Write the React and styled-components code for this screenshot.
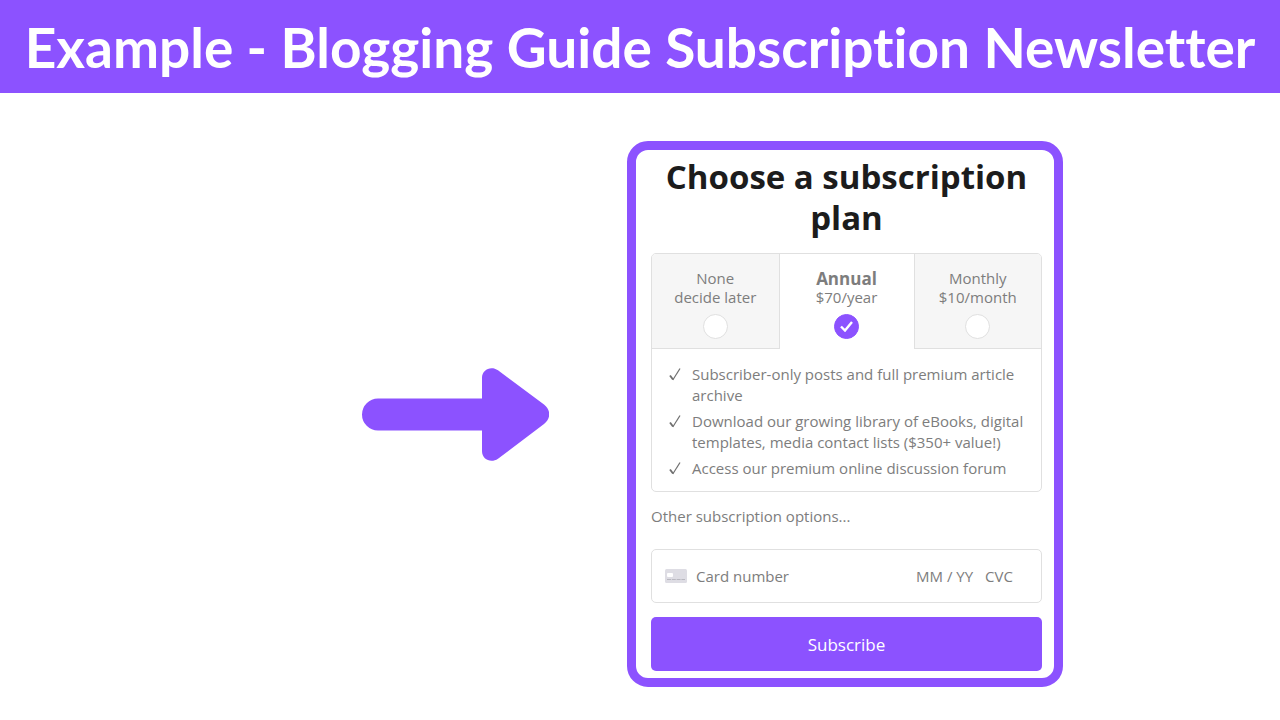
import React, { useState } from 'react';
import styled, { createGlobalStyle } from 'styled-components';

const GlobalStyle = createGlobalStyle`
  * {
    box-sizing: border-box;
  }
  body {
    margin: 0;
    background-color: #fff;
    color: #7d7d7d;
    font-family: 'Open Sans', 'Noto Sans', sans-serif;
    font-size: 15px;
  }
  button,
  input {
    font-family: inherit;
    font-size: inherit;
  }
`;

const Banner = styled.header`
  display: flex;
  align-items: center;
  justify-content: center;
  height: 93px;
  background-color: #8c52ff;
`;

const BannerTitle = styled.h1`
  margin: 0;
  color: #fff;
  font-family: Lato, sans-serif;
  font-size: 55px;
  font-weight: 700;
  font-variant-ligatures: none;
  line-height: 64px;
  white-space: nowrap;
`;

const Main = styled.main`
  display: flex;
  align-items: center;
  justify-content: center;
  gap: 78px;
  padding: 48px 0 33px 145px;
`;

const Arrow = styled.svg`
  flex: none;
  width: 187px;
  height: 93px;
  fill: #8c52ff;
`;

const Card = styled.form`
  flex: none;
  width: 436px;
  padding: 6px 12px 7px 15px;
  border: 9px solid #8c52ff;
  border-radius: 21px;
`;

const CardTitle = styled.h2`
  margin: 0 0 15px;
  color: #1c1c1c;
  font-size: 33px;
  font-weight: 700;
  line-height: 41px;
  text-align: center;
`;

const PlanBox = styled.section`
  border: 1px solid #e0e0e0;
  border-radius: 5px;
  overflow: hidden;
`;

const Plans = styled.div`
  display: grid;
  grid-template-columns: 1fr 136px 1fr;
`;

const Plan = styled.label`
  display: flex;
  flex-direction: column;
  align-items: center;
  padding: 15px 0 9px;
  line-height: 19px;
  border: 0 solid #e0e0e0;
  border-bottom-width: 1px;
  background-color: #f6f6f6;
  cursor: pointer;
  &:has(input:checked) {
    border-width: 0 1px;
    padding-bottom: 10px;
    background-color: #fff;
  }
`;

const PlanName = styled.span`
  font-size: ${(props) => (props.$selected ? '17px' : '15px')};
  font-weight: ${(props) => (props.$selected ? 700 : 400)};
`;

const RadioWrapper = styled.span`
  display: grid;
  place-items: center;
  margin-top: 7px;
`;

const Radio = styled.input`
  grid-area: 1 / 1;
  appearance: none;
  width: 25px;
  height: 25px;
  margin: 0;
  border: 1px solid #e0e0e0;
  border-radius: 50%;
  background-color: #fff;
  &:checked {
    border-color: #8c52ff;
    background-color: #8c52ff;
  }
`;

const RadioTick = styled.svg`
  grid-area: 1 / 1;
  width: 13px;
  height: 11px;
  fill: none;
  stroke: #fff;
  stroke-width: 2.4;
  pointer-events: none;
`;

const Benefits = styled.ul`
  display: flex;
  flex-direction: column;
  gap: 5px;
  margin: 0;
  padding: 15px 12px 12px 17px;
  list-style: none;
`;

const Benefit = styled.li`
  display: flex;
  gap: 11px;
  line-height: 21px;
`;

const BenefitTick = styled.svg`
  flex: none;
  width: 12px;
  height: 21px;
  fill: none;
  stroke: #6f6f6f;
`;

const OtherOptions = styled.a`
  display: block;
  margin: 14px 0 23px;
  color: inherit;
  line-height: 20px;
  text-decoration: none;
`;

const CardField = styled.div`
  display: flex;
  align-items: center;
  height: 54px;
  margin-bottom: 14px;
  padding: 0 22px 0 13px;
  border: 1px solid #e0e0e0;
  border-radius: 5px;
`;

const CardIcon = styled.svg`
  flex: none;
  width: 22px;
  height: 14px;
  margin-right: 9px;
`;

const CardInput = styled.input`
  flex: ${(props) => (props.$width ? 'none' : '1')};
  width: ${(props) => props.$width || 'auto'};
  min-width: 0;
  padding: 0;
  border: 0;
  outline: 0;
  background: none;
  color: #7d7d7d;
  &::placeholder {
    color: #7d7d7d;
    opacity: 1;
  }
`;

const SubscribeButton = styled.button`
  display: block;
  width: 100%;
  height: 54px;
  border: 0;
  border-radius: 5px;
  background-color: #8c52ff;
  color: #fff;
  font-size: 17px;
  cursor: pointer;
`;

const plans = [
  { id: 'none', name: 'None', price: 'decide later' },
  { id: 'annual', name: 'Annual', price: '$70/year' },
  { id: 'monthly', name: 'Monthly', price: '$10/month' },
];

const benefits = [
  'Subscriber-only posts and full premium article archive',
  'Download our growing library of eBooks, digital templates, media contact lists ($350+ value!)',
  'Access our premium online discussion forum',
];

const App = () => {
  const [selected, setSelected] = useState('annual');

  return (
    <>
      <GlobalStyle />
      <Banner>
        <BannerTitle>Example - Blogging Guide Subscription Newsletter</BannerTitle>
      </Banner>
      <Main>
        <Arrow viewBox="0 0 187 93" aria-hidden="true">
          <path d="M16 30.500H120V10C120 1.500 129 -2.500 136 2.300L182 36.500C189 42 189 50.500 182 56L136 90.700C129 95.500 120 91.500 120 83V62.500H16A16 16 0 0 1 16 30.500Z" />
        </Arrow>
        <Card onSubmit={(event) => event.preventDefault()}>
          <CardTitle>Choose a subscription plan</CardTitle>
          <PlanBox>
            <Plans>
              {plans.map((plan) => (
                <Plan key={plan.id}>
                  <PlanName $selected={plan.id === selected}>{plan.name}</PlanName>
                  <span>{plan.price}</span>
                  <RadioWrapper>
                    <Radio
                      type="radio"
                      name="plan"
                      value={plan.id}
                      checked={plan.id === selected}
                      onChange={() => setSelected(plan.id)}
                    />
                    {plan.id === selected && (
                      <RadioTick viewBox="0 0 13 11">
                        <path d="M1 5.500L5 9.500L12 1" />
                      </RadioTick>
                    )}
                  </RadioWrapper>
                </Plan>
              ))}
            </Plans>
            <Benefits>
              {benefits.map((benefit) => (
                <Benefit key={benefit}>
                  <BenefitTick viewBox="0 0 12 21">
                    <path d="M1 11.500L4 15.500" strokeWidth="1.800" />
                    <path d="M3.800 16L11 4.500" strokeWidth="1.200" />
                  </BenefitTick>
                  {benefit}
                </Benefit>
              ))}
            </Benefits>
          </PlanBox>
          <OtherOptions href="#options">Other subscription options...</OtherOptions>
          <CardField>
            <CardIcon viewBox="0 0 22 14" aria-hidden="true">
              <rect width="22" height="14" rx="1.500" fill="#dedde4" />
              <rect x="2" y="4" width="6" height="4" rx="1" fill="#fff" />
              <path d="M2 10.500H20" stroke="#b9b8c0" strokeDasharray="4 0.800" />
            </CardIcon>
            <CardInput aria-label="Card number" placeholder="Card number" />
            <CardInput $width="69px" aria-label="Expiry date" placeholder="MM / YY" />
            <CardInput $width="34px" aria-label="CVC" placeholder="CVC" />
          </CardField>
          <SubscribeButton type="submit">Subscribe</SubscribeButton>
        </Card>
      </Main>
    </>
  );
};

export default App;
